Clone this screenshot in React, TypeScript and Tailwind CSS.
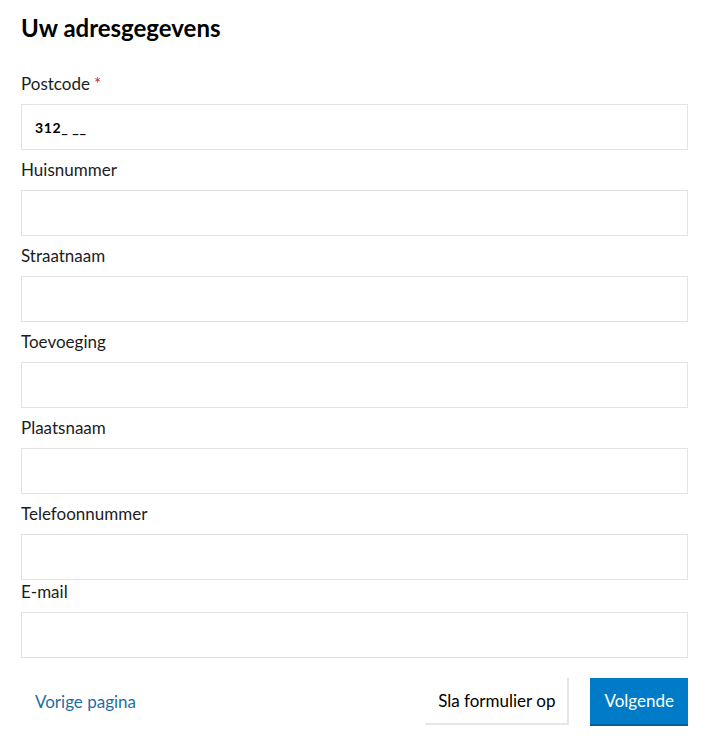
const FIELDS = [
  { label: "Postcode", required: true, value: "312_ __" },
  { label: "Huisnummer" },
  { label: "Straatnaam" },
  { label: "Toevoeging" },
  { label: "Plaatsnaam" },
  { label: "Telefoonnummer" },
];

function Field({ label, required, value, first }: { label: string; required?: boolean; value?: string; first?: boolean }) {
  return (
    <div className={first ? "" : "mt-2"}>
      <label className="block text-[17px] leading-6 text-[#1c1c1c]">
        {label}
        {required && <span className="text-[#d52b1e] ml-1">*</span>}
      </label>
      <input
        readOnly
        value={value ?? ""}
        className="mt-2 block w-full h-[46px] border border-[#e3e3e3] bg-white px-[13px] text-[14px] font-bold tracking-[0.6px] text-black outline-none"
      />
    </div>
  );
}

export default function App() {
  return (
    <div className="min-h-[747px] bg-white pl-[21px] pr-[25px] pt-[14px] pb-5 font-['Lato','Noto_Sans',sans-serif] text-[#1c1c1c]">
      <h1 className="text-[24px] leading-7 font-bold text-black mb-[30px]">Uw adresgegevens</h1>
      {FIELDS.map((f, i) => (
        <Field key={f.label} {...f} first={i === 0} />
      ))}
      <div>
        <label className="block text-[17px] leading-6 text-[#1c1c1c]">E-mail</label>
        <input readOnly className="mt-2 block w-full h-[46px] border border-[#e3e3e3] bg-white outline-none" />
      </div>
      <div className="mt-5 flex items-center">
        <a href="#" className="ml-[14px] text-[17px] text-[#1f6ea1]">Vorige pagina</a>
        <div className="ml-auto flex gap-[21px]">
          <button className="h-[47px] pl-[13px] pr-[12px] bg-white border-r-2 border-b-2 border-[#e6e6e6] text-[17px] text-black">
            Sla formulier op
          </button>
          <button className="h-[48px] px-[14px] bg-[#007bc7] border-b-2 border-[#005f9a] text-[17px] text-white">
            Volgende
          </button>
        </div>
      </div>
    </div>
  );
}
